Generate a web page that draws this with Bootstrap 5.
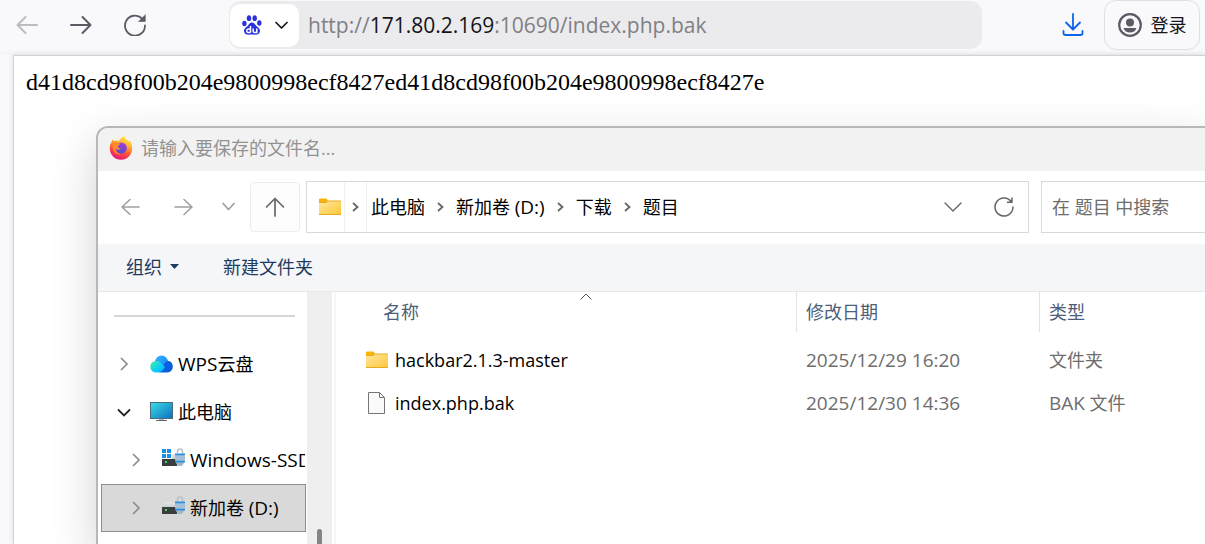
<!DOCTYPE html>
<html lang="zh-CN">
<head>
<meta charset="utf-8">
<meta name="viewport" content="width=device-width, initial-scale=1">
<title>index.php.bak</title>
<link rel="stylesheet" href="https://cdn.jsdelivr.net/npm/bootstrap@5.3.0/dist/css/bootstrap.min.css">
<style>
  body { background: #f9f9fb; font-family: "Open Sans", "Noto Sans CJK SC", sans-serif; font-size: 18px; line-height: 24px; color: #000; }
  svg { display: block; flex: none; }
  .latin { font-size: 19px; }
  .plain-btn { background: none; border: 0; padding: 0; color: inherit; display: flex; align-items: center; justify-content: center; }

  /* browser toolbar */
  .browser-bar { height: 55px; padding: 0 5px 5px 0; background: linear-gradient(#f9f9fb 49px, #f4f4f6); color: #5b5b66; }
  .bar-btn { width: 54px; height: 50px; }
  .url-bar { height: 48px; background: #ebebed; border-radius: 12px; margin-left: 67px; margin-right: 75px; }
  .engine-btn { width: 69px; height: 43px; margin-left: 1px; background: #fff; border-radius: 10px; gap: 13px; color: #15141a; }
  .url-text { font-size: 21px; line-height: 32px; color: #808084; padding-left: 9px; outline: 0; }
  .url-text b { font-weight: 400; color: #15141a; }
  .login-btn { width: 96px; height: 50px; border: 1px solid #dfdfe3; border-radius: 12px; gap: 9px; color: #15141a; margin-left: 15px; }

  /* page */
  .web-page { margin-left: 13px; border: solid #d2d2d5; border-width: 1px 0 0 1px; background: #fff; box-shadow: 0 0 5px rgba(0,0,0,.12); }
  .page-text { font: 24px/28px "Liberation Serif", serif; padding: 12px 12px 0; margin: 0; }

  /* save dialog */
  .save-dialog { margin: 30px 0 0 82px; border: solid #b8b8b8; border-width: 2px 0 0 2px; border-radius: 12px 0 0 0; background: #fff; box-shadow: 0 16px 46px rgba(0,0,0,.18); overflow: hidden; }
  .title-row { height: 43px; background: #f2f2f2; color: #929292; padding: 0 0 4px 11px; gap: 8px; }
  .nav-row { height: 73px; color: #a0a0a0; padding: 0 0 2px 14px; }
  .up-btn { width: 50px; height: 50px; border: 1px solid #ececee; border-radius: 4px; background: #fdfdfe; color: #666; margin: 0 6px 0 7px; }
  .address-box { height: 52px; border: 1px solid #d9d9d9; color: #666; padding-left: 12px; }
  .address-box a { color: #000; text-decoration: none; }
  .root-sep { width: 23px; height: 50px; border: solid #f0f0f0; border-width: 0 1px; margin: 0 4px 0 3px; }
  .search-box { width: 164px; height: 52px; margin-left: 12px; border: 1px solid #d9d9d9; border-right: 0; border-radius: 0; padding: 0 10px; color: #666; background: #fff; outline: 0; }
  .search-box::placeholder { color: #6d6d6d; opacity: 1; }
  .cmd-row { height: 48px; background: #f4f6f8; border-bottom: 1px solid #e4e6e9; color: #1f3a5f; padding: 0 0 2px 28px; gap: 44px; }
  .main-area { height: calc(100vh - 292px); min-height: 252px; }
  .side-tree { width: 209px; overflow: hidden; color: #000; }
  .side-tree hr { margin: 23px 12px 23px 16px; border: 0; height: 2px; background: #d5d5d5; opacity: 1; }
  .tree-item { height: 48px; margin: 0 1px 0 3px; padding-left: 14px; border: 1px solid transparent; color: #000; white-space: nowrap; text-decoration: none; overflow: hidden; }
  .tree-item .twisty { flex: 0 0 34px; color: #8c8c8c; }
  .tree-item .label { padding-left: 5px; }
  .tree-sub { padding-left: 26px; }
  .tree-item.chosen { background: #d9d9d9; border-color: #8f8f8f; }
  .scroll-track { width: 25px; background: #efefef; padding-left: 10px; overflow: hidden; }
  .scroll-thumb { width: 5px; height: 200px; margin-top: 237px; border-radius: 3px; background: #858585; }
  .file-pane { border-left: 2px solid #f7f7f7; margin-left: 2px; }
  .file-table { table-layout: fixed; width: 100%; color: #6d6d6d; }
  .file-table th { font-weight: 400; color: #4c607a; padding: 0 0 6px; }
  .file-table td { height: 43px; padding: 0 0 0 10px; }
  .file-table td:first-child { padding-left: 30px; color: #000; }
  .name-cell { gap: 7px; }
  .head-cell { height: 40px; padding-left: 9px; border-left: 1px solid #e3e3e3; }
  th:first-child .head-cell { border: 0; padding-left: 47px; }
  .sort-mark { position: absolute; top: 1px; left: 50%; margin-left: 14px; }
  .col-date { width: 243px; }
  .col-type { width: 166px; }
</style>
</head>
<body class="overflow-hidden">
<svg width="0" height="0" class="position-absolute" aria-hidden="true">
  <defs>
    <linearGradient id="folderFill" x1="0" y1="0" x2="1" y2="1"><stop offset="0" stop-color="#ffe7a0"/><stop offset="1" stop-color="#fdc738"/></linearGradient>
    <linearGradient id="driveTop" x1="0" y1="0" x2="0" y2="1"><stop offset="0" stop-color="#e6e8ea"/><stop offset="1" stop-color="#c9cdd1"/></linearGradient>
    <symbol id="folder" viewBox="0 0 22 18">
      <path d="M0 2Q0 1 1 1H7L8.500 2.500H21Q22 2.500 22 3.500V17H0Z" fill="#e9a91f"/>
      <path d="M0 1.500Q0 .5 1 .5H7.500L8.500 2V4H0Z" fill="#f8b30d"/>
      <path d="M0 5H7L9 3.500H22V16H0Z" fill="url(#folderFill)"/>
    </symbol>
    <symbol id="drive" viewBox="0 0 23 19">
      <path d="M4 6H15V11H0Z" fill="url(#driveTop)"/>
      <rect y="11" width="15" height="7" fill="#3a3d40"/>
      <rect x="3" y="13" width="2" height="2" fill="#3ee04a"/>
      <path d="M15.500 5V3.500Q15.500 1 18 1T20.500 3.500V6" fill="none" stroke="#b9c0c6" stroke-width="1.600"/>
      <path d="M14 6H22V15L20 18H16L14 15Z" fill="#a4b7c5"/>
      <path d="M13 5.500H23V7.500H13ZM13 12.500H23V14.500H13Z" fill="#2b91dd"/>
      <path d="M13 7.500H23V12.500H13Z" fill="#a3c0d6"/>
    </symbol>
  </defs>
</svg>

<header class="browser-bar d-flex align-items-center">
  <nav class="d-flex" aria-label="浏览">
    <button class="plain-btn bar-btn" aria-label="后退" disabled><svg width="22" height="20" viewBox="0 0 22 20" fill="none" stroke="#bcbcc2" stroke-width="2" stroke-linecap="round" stroke-linejoin="round"><path d="M21 10H1.500M9.500 2L1.500 10L9.500 18"/></svg></button>
    <button class="plain-btn bar-btn" aria-label="前进"><svg width="22" height="20" viewBox="0 0 22 20" fill="none" stroke="currentColor" stroke-width="2" stroke-linecap="round" stroke-linejoin="round"><path d="M1 10H20.500M12.500 2L20.500 10L12.500 18"/></svg></button>
    <button class="plain-btn bar-btn" aria-label="刷新"><svg width="22" height="22" viewBox="0 0 22 22" fill="none" stroke="currentColor" stroke-width="1.800" stroke-linecap="round"><path d="M18 4.500A10 10 0 1 0 21 11.500"/><path d="M21.300 1V7.500H14.800Z" fill="currentColor" stroke-width=".6" stroke-linejoin="round"/></svg></button>
  </nav>
  <div class="url-bar d-flex align-items-center flex-grow-1">
    <button class="plain-btn engine-btn" aria-label="搜索引擎">
      <svg width="20" height="20" viewBox="0 0 20 20" fill="#2a32dc"><ellipse cx="2.400" cy="8.500" rx="2.200" ry="2.800"/><ellipse cx="7" cy="3.200" rx="2.200" ry="2.900"/><ellipse cx="12.700" cy="3.200" rx="2.200" ry="2.900"/><ellipse cx="17.300" cy="8" rx="2.200" ry="2.700"/><path d="M10 7.500C12.500 7.500 13.200 10 15 11.500C17.500 13.500 18.500 14.800 17.800 17C17 20 14 19.800 10 19.500C6 19.800 3 20 2.200 17C1.500 14.800 2.500 13.500 5 11.500C6.800 10 7.500 7.500 10 7.500Z"/><path d="M8.500 11V17.500M8.500 14H6.200Q4.800 14 4.800 15.800T6.200 17.500H8.500M11.200 13.500V16.500Q11.200 17.500 12.300 17.500H14.800V13.500" fill="none" stroke="#fff" stroke-width="1.500"/></svg>
      <svg width="13" height="9" viewBox="0 0 13 9" fill="none" stroke="currentColor" stroke-width="1.700" stroke-linecap="round" stroke-linejoin="round"><path d="M1 1.500L6.500 7L12 1.500"/></svg>
    </button>
    <div class="url-text flex-grow-1" role="textbox" contenteditable="true" spellcheck="false" aria-label="网址">http://<b>171.80.2.169</b>:10690/index.php.bak</div>
  </div>
  <button class="plain-btn" aria-label="下载"><svg width="32" height="24" viewBox="0 0 32 24" fill="none" stroke="#0a66e6" stroke-width="1.800" stroke-linecap="round" stroke-linejoin="round"><path d="M16 1V16M9 9.500L16 16.500L23 9.500M6.500 18V20Q6.500 22 8.500 22H23.500Q25.500 22 25.500 20V18"/></svg></button>
  <button class="plain-btn login-btn"><svg width="24" height="24" viewBox="0 0 24 24"><circle cx="12" cy="12" r="10.800" fill="none" stroke="#5b5b66" stroke-width="2.200"/><circle cx="12" cy="9.500" r="4" fill="#5b5b66"/><path d="M5.500 15H18.500Q17 19.500 12 19.500T5.500 15Z" fill="#5b5b66"/></svg>登录</button>
</header>

<main class="web-page">
  <p class="page-text">d41d8cd98f00b204e9800998ecf8427ed41d8cd98f00b204e9800998ecf8427e</p>

  <section class="save-dialog" role="dialog" aria-labelledby="dlgTitle">
    <div class="title-row d-flex align-items-center">
      <svg width="24" height="24" viewBox="0 0 24 24">
        <defs>
          <linearGradient id="foxBody" x1=".75" y1="0" x2=".35" y2="1"><stop offset="0" stop-color="#fff04a"/><stop offset=".35" stop-color="#ffb02e"/><stop offset=".65" stop-color="#ff5038"/><stop offset="1" stop-color="#e3127f"/></linearGradient>
          <linearGradient id="foxGlobe" x1=".7" y1="0" x2=".3" y2="1"><stop offset="0" stop-color="#a738e0"/><stop offset="1" stop-color="#4a4fd0"/></linearGradient>
        </defs>
        <path d="M15.200 0C16 2.500 18 3.500 19.300 5L20.600 4.600C22.500 7 23.300 9.500 23.200 12.500A11.200 11.200 0 0 1 .8 12.500C.8 9.500 1.600 7.500 2.800 5.800L3 3.400L5 5C6.500 4.300 8.500 4.300 10 5C10.500 3 13 1 15.200 0Z" fill="url(#foxBody)"/>
        <circle cx="12.200" cy="12" r="5.600" fill="url(#foxGlobe)"/>
        <path d="M3.500 7.500L6 7L6.800 5.500L8.300 7.200L11.500 7.500C11.300 8.700 9.500 9.300 9 10C9.200 11.800 10.200 12.600 12 12.600C10.500 14.500 8 14 7 12.500C6.500 15.500 9 18 12 18C8 20 3 16.500 3.500 7.500Z" fill="#ff8a26"/>
      </svg>
      <span id="dlgTitle">请输入要保存的文件名...</span>
    </div>

    <div class="nav-row d-flex align-items-center">
      <button class="plain-btn" aria-label="返回" disabled><svg width="38" height="18" viewBox="0 0 38 18" fill="none" stroke="#a0a0a0" stroke-width="1.600" stroke-linecap="round" stroke-linejoin="round"><path d="M27 9H10M18 1.500L10 9L18 16.500"/></svg></button>
      <button class="plain-btn ms-3" aria-label="向前" disabled><svg width="36" height="18" viewBox="0 0 36 18" fill="none" stroke="#a0a0a0" stroke-width="1.600" stroke-linecap="round" stroke-linejoin="round"><path d="M9 9H26M18 1.500L26 9L18 16.500"/></svg></button>
      <button class="plain-btn ms-3" aria-label="最近位置"><svg width="25" height="10" viewBox="0 0 25 10" fill="none" stroke="currentColor" stroke-width="1.700" stroke-linecap="round" stroke-linejoin="round"><path d="M5 1.500L10.500 7.500L16 1.500"/></svg></button>
      <button class="plain-btn up-btn" aria-label="上移"><svg width="20" height="20" viewBox="0 0 20 20" fill="none" stroke="currentColor" stroke-width="1.700" stroke-linecap="round" stroke-linejoin="round"><path d="M10 19V1.500M1.500 10L10 1.500L18.500 10"/></svg></button>
      <div class="address-box d-flex align-items-center flex-grow-1">
        <svg width="22" height="18"><use href="#folder"/></svg>
        <span class="root-sep d-flex align-items-center justify-content-center"><svg width="7" height="10" viewBox="0 0 7 10" fill="none" stroke="currentColor" stroke-width="1.800"><path d="M1 1L5.500 5L1 9"/></svg></span>
        <nav class="d-flex align-items-center gap-2" aria-label="路径">
          <a href="#">此电脑</a>
          <svg width="15" height="10" viewBox="0 0 15 10" fill="none" stroke="currentColor" stroke-width="1.800"><path d="M5 1L9.500 5L5 9"/></svg>
          <a href="#">新加卷 <span class="latin">(D:)</span></a>
          <svg width="15" height="10" viewBox="0 0 15 10" fill="none" stroke="currentColor" stroke-width="1.800"><path d="M5 1L9.500 5L5 9"/></svg>
          <a href="#">下载</a>
          <svg width="15" height="10" viewBox="0 0 15 10" fill="none" stroke="currentColor" stroke-width="1.800"><path d="M5 1L9.500 5L5 9"/></svg>
          <a href="#">题目</a>
        </nav>
        <button class="plain-btn ms-auto" aria-label="历史位置"><svg width="18" height="10" viewBox="0 0 18 10" fill="none" stroke="currentColor" stroke-width="1.400" stroke-linecap="round" stroke-linejoin="round"><path d="M1 1L9 9L17 1"/></svg></button>
        <button class="plain-btn ms-3 ps-3" aria-label="刷新目录"><svg width="34" height="20" viewBox="1 0 34 20" fill="none" stroke="currentColor" stroke-width="1.500" stroke-linecap="round" stroke-linejoin="round"><path d="M18.500 5A9 9 0 1 0 20 10M19 1V5.300H14.500"/></svg></button>
      </div>
      <input class="search-box" type="search" placeholder="在 题目 中搜索" aria-label="搜索">
    </div>

    <div class="cmd-row d-flex align-items-center">
      <button class="plain-btn gap-2">组织<svg width="9" height="5" viewBox="0 0 9 5" fill="currentColor"><path d="M0 0H9L4.500 5Z"/></svg></button>
      <button class="plain-btn">新建文件夹</button>
    </div>

    <div class="main-area d-flex">
      <nav class="side-tree flex-shrink-0" aria-label="位置">
        <hr>
        <a href="#" class="tree-item d-flex align-items-center">
          <span class="twisty"><svg width="16" height="14" viewBox="0 0 16 14" fill="none" stroke="currentColor" stroke-width="1.700"><path d="M5 1L11 7L5 13"/></svg></span>
          <svg width="23" height="18" viewBox="0 0 23 18">
            <defs><linearGradient id="cloudMid" x1="0" y1="0" x2="1" y2="1"><stop offset="0" stop-color="#39b8ff"/><stop offset="1" stop-color="#0e7af5"/></linearGradient><linearGradient id="cloudLeft" x1="0" y1="0" x2="1" y2="1"><stop offset="0" stop-color="#48efa0"/><stop offset=".6" stop-color="#08cdf8"/><stop offset="1" stop-color="#12a9ff"/></linearGradient></defs>
            <circle cx="11.500" cy="7" r="6.500" fill="url(#cloudMid)"/><path d="M9 17.500L15 8Q18 4.500 21 7Q23.500 9.500 22.500 13.500Q21 17.500 17 17.500Z" fill="#0a5fdf"/><path d="M6 6Q10 5.500 12 9L15 12Q12 17.500 7 17.500Q.3 17.500 .3 11.500Q.3 6.500 6 6Z" fill="url(#cloudLeft)"/>
          </svg>
          <span class="label"><span class="latin">WPS</span>云盘</span>
        </a>
        <a href="#" class="tree-item d-flex align-items-center">
          <span class="twisty text-dark"><svg width="16" height="9" viewBox="0 0 16 9" fill="none" stroke="currentColor" stroke-width="1.800"><path d="M2 1.500L8 7.500L14 1.500"/></svg></span>
          <svg width="23" height="20" viewBox="0 0 23 20">
            <defs><linearGradient id="screen" x1="0" y1="0" x2="1" y2="1"><stop offset="0" stop-color="#3bdde6"/><stop offset="1" stop-color="#0d6fc0"/></linearGradient></defs>
            <rect x=".5" y=".5" width="22" height="16" fill="url(#screen)" stroke="#4b6b78"/><path d="M9 17H14V18H9Z" fill="#aeb7bd"/><path d="M6 18H17V19H6Z" fill="#59656d"/>
          </svg>
          <span class="label">此电脑</span>
        </a>
        <a href="#" class="tree-item tree-sub d-flex align-items-center">
          <span class="twisty"><svg width="16" height="14" viewBox="0 0 16 14" fill="none" stroke="currentColor" stroke-width="1.700"><path d="M5 1L11 7L5 13"/></svg></span>
          <svg width="23" height="24" viewBox="0 0 23 24"><use href="#drive" width="23" height="19"/><path d="M0 0H10V11H0Z" fill="#fff"/><path d="M0 1H4V5H0ZM5 1H9V5H5ZM0 6H4V10H0ZM5 6H9V10H5Z" fill="#178fe4"/></svg>
          <span class="label latin">Windows-SSD</span>
        </a>
        <a href="#" class="tree-item tree-sub chosen d-flex align-items-center" aria-current="true">
          <span class="twisty"><svg width="16" height="14" viewBox="0 0 16 14" fill="none" stroke="currentColor" stroke-width="1.700"><path d="M5 1L11 7L5 13"/></svg></span>
          <svg width="23" height="24" viewBox="0 0 23 24"><use href="#drive" width="23" height="19"/></svg>
          <span class="label">新加卷 <span class="latin">(D:)</span></span>
        </a>
      </nav>
      <div class="scroll-track flex-shrink-0"><div class="scroll-thumb"></div></div>
      <div class="file-pane flex-grow-1">
        <table class="file-table">
          <colgroup><col><col class="col-date"><col class="col-type"></colgroup>
          <thead>
            <tr>
              <th scope="col" class="position-relative"><div class="head-cell d-flex align-items-center">名称</div><svg class="sort-mark" width="12" height="7" viewBox="0 0 12 7" fill="none" stroke="#555"><path d="M.5 6.500L6 1L11.500 6.500"/></svg></th>
              <th scope="col"><div class="head-cell d-flex align-items-center">修改日期</div></th>
              <th scope="col"><div class="head-cell d-flex align-items-center">类型</div></th>
            </tr>
          </thead>
          <tbody>
            <tr>
              <td><div class="name-cell d-flex align-items-center"><svg width="22" height="18"><use href="#folder"/></svg><span>hackbar2.1.3-master</span></div></td>
              <td class="latin">2025/12/29 16:20</td>
              <td>文件夹</td>
            </tr>
            <tr>
              <td><div class="name-cell d-flex align-items-center"><svg width="22" height="22" viewBox="0 0 22 22"><path d="M2.500 .5H13.500L18.500 5.500V21.500H2.500Z" fill="#fafafa" stroke="#757575"/><path d="M13.500 .5V5.500H18.500" fill="none" stroke="#757575"/></svg><span>index.php.bak</span></div></td>
              <td class="latin">2025/12/30 14:36</td>
              <td><span class="latin">BAK</span> 文件</td>
            </tr>
          </tbody>
        </table>
      </div>
    </div>
  </section>
</main>
<script src="https://cdn.jsdelivr.net/npm/bootstrap@5.3.0/dist/js/bootstrap.bundle.min.js"></script>
</body>
</html>
